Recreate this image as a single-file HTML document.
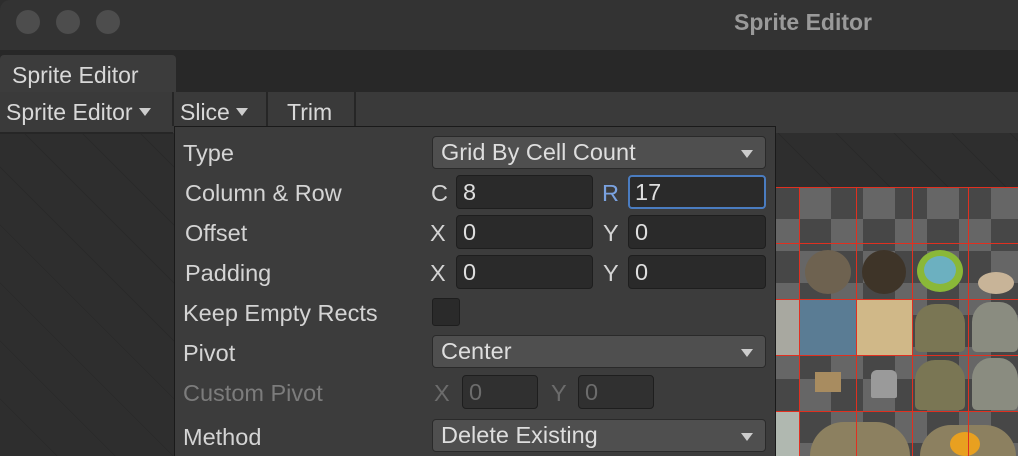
<!DOCTYPE html>
<html><head><style>
*{margin:0;padding:0;box-sizing:border-box}
html{width:1018px;height:456px;overflow:hidden}
body{width:1018px;height:456px;overflow:hidden;background:#2d2d2d;font-family:"Liberation Sans",sans-serif;position:relative;color:#d2d2d2}
.abs{position:absolute}
.title{left:0;top:0;width:1018px;height:50px;background:#333;border-radius:10px 0 0 0}
.dot{width:24px;height:24px;border-radius:50%;background:#4d4d4d;top:10px}
.tabs{left:0;top:50px;width:1018px;height:42px;background:#282828}
.tab{left:0;top:55px;width:176px;height:37px;background:#3c3c3c;border-radius:4px 4px 0 0;font-size:23px;padding:7px 0 0 12px;color:#d8d8d8}
.tool{left:0;top:92px;width:1018px;height:41px;background:#3a3a3a}
.canvas{left:0;top:133px;width:1018px;height:323px;background:repeating-linear-gradient(45deg,#2e2e2e 0 40px,#292929 40px 41px)}
.tb{top:92px;height:34px;font-size:23px;padding-top:7px;color:#d8d8d8}
.tri{display:inline-block;width:0;height:0;border-left:6px solid transparent;border-right:6px solid transparent;border-top:8px solid #ccc;margin-left:6px;vertical-align:4px}
.panel{left:174px;top:126px;width:602px;height:330px;background:#3c3c3c;border:1px solid #1a1a1a;border-bottom:none}
.lbl{font-size:23.5px;line-height:27px;color:#d4d4d4}
.dd{background:#4f4f4f;border:1px solid #2a2a2a;border-radius:4px;height:33px;font-size:23.5px;line-height:27px;padding:2px 0 0 8px;color:#dedede}
.dd .tri{position:absolute;right:12px;top:13px;margin:0}
.fld{background:#2a2a2a;border:1px solid #1e1e1e;border-radius:4px;height:34px;font-size:23.5px;line-height:27px;padding:3px 0 0 6px;color:#dedede}
.chk{background:#2a2a2a;border:1px solid #1e1e1e;border-radius:3px}
.clip{left:776px;top:187px;width:242px;height:269px;overflow:hidden}
.checker{left:0;top:0;width:242px;height:269px;background-color:#666;background-image:linear-gradient(45deg,#474747 25%,transparent 25%,transparent 75%,#474747 75%),linear-gradient(45deg,#474747 25%,transparent 25%,transparent 75%,#474747 75%);background-size:64px 64px;background-position:23px 0,55px 32px}
.v{width:1px;background:#e03020;top:0;height:269px}
.h{height:1px;background:#e03020;left:0;width:242px}
.blob{border-radius:50%}
</style></head><body>
<div class="abs canvas"></div>
<div class="abs clip">
<div class="abs checker"></div>
<div class="abs blob" style="left:29px;top:63px;width:46px;height:44px;background:#6e6250"></div>
<div class="abs blob" style="left:86px;top:63px;width:44px;height:44px;background:#3e3428"></div>
<div class="abs blob" style="left:141px;top:63px;width:46px;height:42px;background:#8ab838"></div>
<div class="abs blob" style="left:148px;top:69px;width:32px;height:28px;background:#6cb0c0"></div>
<div class="abs blob" style="left:202px;top:85px;width:36px;height:22px;background:#c8b498"></div>
<div class="abs" style="left:0;top:113px;width:23px;height:55px;background:#a8a8a0"></div>
<div class="abs" style="left:24px;top:113px;width:56px;height:55px;background:#5a7c94"></div>
<div class="abs" style="left:80px;top:113px;width:56px;height:55px;background:#d0b888"></div>
<div class="abs" style="left:139px;top:117px;width:50px;height:48px;background:#7a7654;border-radius:40% 40% 10% 10%"></div>
<div class="abs" style="left:196px;top:115px;width:46px;height:50px;background:#8a8c80;border-radius:40% 40% 10% 10%"></div>
<div class="abs" style="left:39px;top:185px;width:26px;height:20px;background:#a88c60"></div>
<div class="abs" style="left:95px;top:183px;width:26px;height:28px;background:#9a9a9a;border-radius:6px 6px 2px 2px"></div>
<div class="abs" style="left:139px;top:173px;width:50px;height:50px;background:#7a7654;border-radius:40% 40% 10% 10%"></div>
<div class="abs" style="left:196px;top:171px;width:46px;height:52px;background:#8a8c80;border-radius:40% 40% 10% 10%"></div>
<div class="abs" style="left:0;top:225px;width:23px;height:44px;background:#b0b8b0"></div>
<div class="abs" style="left:34px;top:235px;width:100px;height:34px;background:#8c8060;border-radius:50px 50px 0 0"></div>
<div class="abs" style="left:144px;top:238px;width:96px;height:31px;background:#8c8060;border-radius:48px 48px 0 0"></div>
<div class="abs blob" style="left:174px;top:245px;width:30px;height:24px;background:#e8a020"></div>
<div class="abs v" style="left:23px"></div><div class="abs v" style="left:80px"></div><div class="abs v" style="left:136px"></div><div class="abs v" style="left:192px"></div>
<div class="abs h" style="top:0"></div><div class="abs h" style="top:56px"></div><div class="abs h" style="top:112px"></div><div class="abs h" style="top:168px"></div><div class="abs h" style="top:224px"></div>
</div>

<div class="abs title"></div>
<div class="abs dot" style="left:16px"></div><div class="abs dot" style="left:56px"></div><div class="abs dot" style="left:96px"></div>
<div class="abs" style="left:734px;top:9px;font-size:23px;font-weight:bold;color:#9a9a9a">Sprite Editor</div>
<div class="abs tabs"></div>
<div class="abs tab">Sprite Editor</div>
<div class="abs tool"></div>
<div class="abs" style="left:0;top:132px;width:173px;height:2px;background:#262626"></div>
<div class="abs tb" style="left:6px">Sprite Editor<span class="tri"></span></div>
<div class="abs" style="left:172px;top:92px;width:2px;height:34px;background:#262626"></div>
<div class="abs tb" style="left:180px">Slice<span class="tri"></span></div>
<div class="abs" style="left:266px;top:92px;width:2px;height:34px;background:#262626"></div>
<div class="abs tb" style="left:287px">Trim</div>
<div class="abs" style="left:354px;top:92px;width:2px;height:34px;background:#262626"></div>

<div class="abs panel"></div>
<div class="abs lbl" style="left:183px;top:140px">Type</div>
<div class="abs dd" style="left:432px;top:136px;width:334px">Grid By Cell Count<span class="tri"></span></div>
<div class="abs lbl" style="left:185px;top:180px">Column &amp; Row</div>
<div class="abs lbl" style="left:431px;top:180px">C</div>
<div class="abs fld" style="left:456px;top:175px;width:137px">8</div>
<div class="abs lbl" style="left:602px;top:180px;color:#7aa2e0">R</div>
<div class="abs fld" style="left:628px;top:175px;width:138px;border:2px solid #4a7cc0;padding:2px 0 0 5px">17</div>
<div class="abs lbl" style="left:185px;top:220px">Offset</div>
<div class="abs lbl" style="left:430px;top:220px">X</div>
<div class="abs fld" style="left:456px;top:215px;width:137px">0</div>
<div class="abs lbl" style="left:603px;top:220px">Y</div>
<div class="abs fld" style="left:628px;top:215px;width:138px">0</div>
<div class="abs lbl" style="left:185px;top:260px">Padding</div>
<div class="abs lbl" style="left:430px;top:260px">X</div>
<div class="abs fld" style="left:456px;top:255px;width:137px">0</div>
<div class="abs lbl" style="left:603px;top:260px">Y</div>
<div class="abs fld" style="left:628px;top:255px;width:138px">0</div>
<div class="abs lbl" style="left:183px;top:300px">Keep Empty Rects</div>
<div class="abs chk" style="left:432px;top:298px;width:28px;height:28px"></div>
<div class="abs lbl" style="left:183px;top:340px">Pivot</div>
<div class="abs dd" style="left:432px;top:335px;width:334px">Center<span class="tri"></span></div>
<div class="abs lbl" style="left:183px;top:380px;color:#7c7c7c">Custom Pivot</div>
<div class="abs lbl" style="left:434px;top:380px;color:#6c6c6c">X</div>
<div class="abs fld" style="left:462px;top:375px;width:76px;color:#6c6c6c;background:#303030">0</div>
<div class="abs lbl" style="left:551px;top:380px;color:#6c6c6c">Y</div>
<div class="abs fld" style="left:578px;top:375px;width:76px;color:#6c6c6c;background:#303030">0</div>
<div class="abs lbl" style="left:183px;top:424px">Method</div>
<div class="abs dd" style="left:432px;top:419px;width:334px">Delete Existing<span class="tri"></span></div>
</body></html>
